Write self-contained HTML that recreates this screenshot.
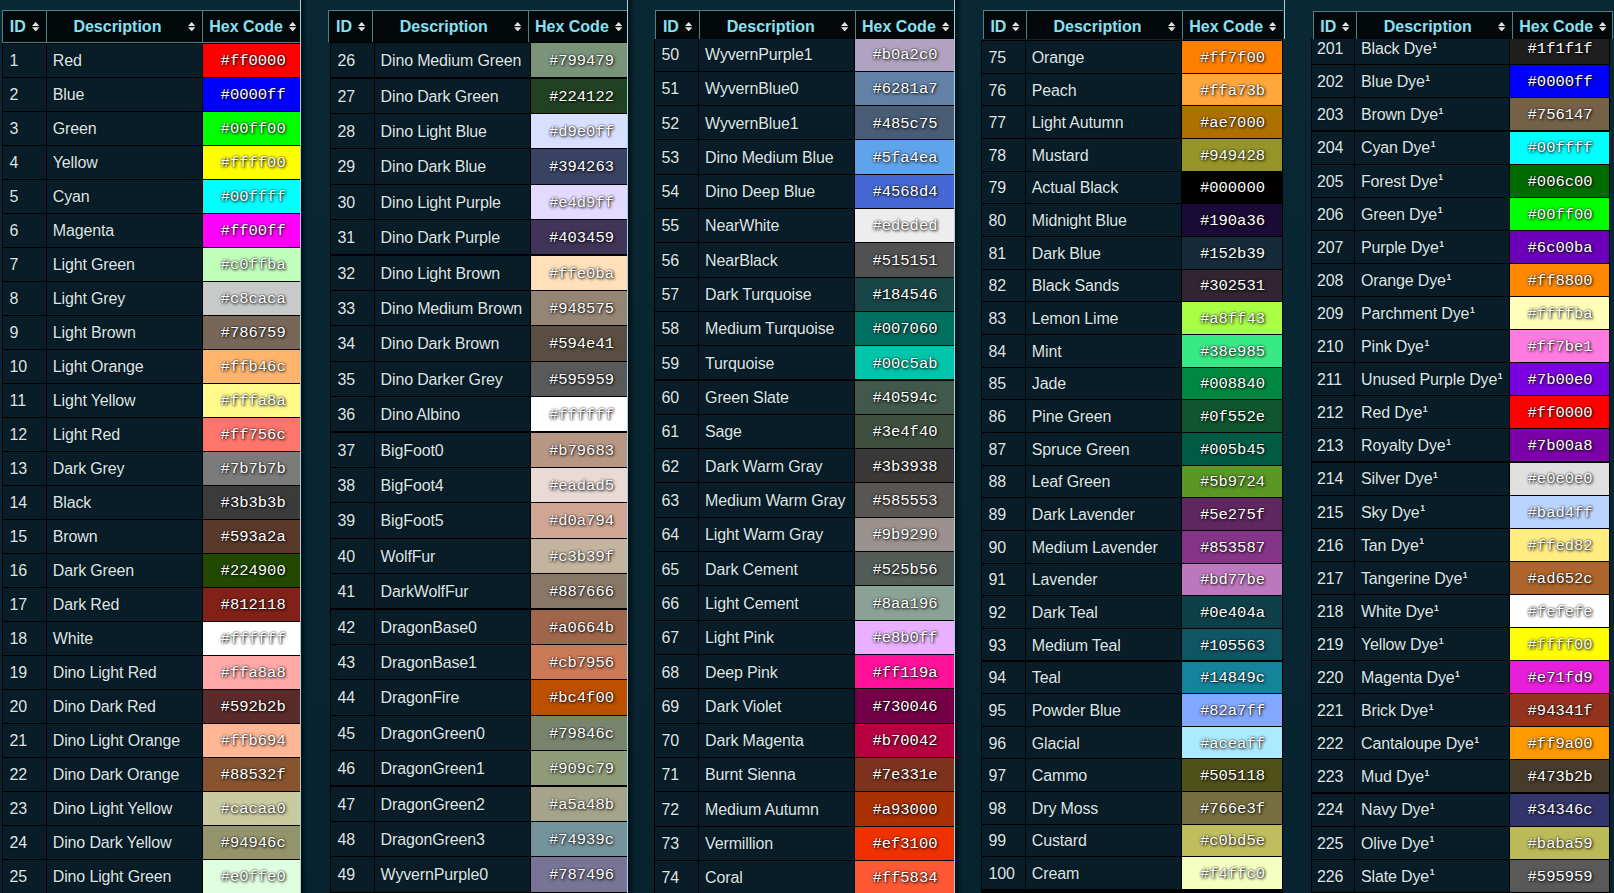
<!DOCTYPE html>
<html><head><meta charset="utf-8"><style>
html,body{margin:0;padding:0;}
body{width:1614px;height:893px;overflow:hidden;position:relative;background:#072531;font-family:"Liberation Sans",sans-serif;}
.bg{position:absolute;left:0;top:0;width:1614px;height:893px;background:linear-gradient(180deg,#0a2834 0%,#082632 50%,#07232f 100%);}
.k{position:absolute;background:#000;}
.c{position:absolute;background:#081d28;overflow:hidden;}
.t{position:absolute;color:#dde7ea;font-size:16px;letter-spacing:-0.15px;white-space:nowrap;line-height:16px;text-shadow:0 0 1.5px #000;}
.x{position:absolute;overflow:hidden;}
.xt{position:absolute;left:0;right:0;text-align:center;color:#fff;font-family:"Liberation Mono",monospace;font-size:15.5px;white-space:nowrap;line-height:16px;text-shadow:1px 1px 3px rgba(0,0,0,.9),0 0 2px rgba(0,0,0,.8);}
.h{position:absolute;background:#03090b;}
.hl{position:absolute;background:#4f8189;}
.ht{position:absolute;color:#88e0f2;font-weight:bold;font-size:16px;line-height:16px;white-space:nowrap;}
.ar{position:absolute;}
.s{font-size:8.5px;font-weight:bold;position:relative;top:-6.2px;margin-left:0.6px;letter-spacing:0;}
.bl{position:absolute;width:1.4px;background:#9cd4e6;top:0;}
.sh{position:absolute;top:0;height:893px;width:7px;background:linear-gradient(90deg,rgba(0,8,12,.75),rgba(0,8,12,0));}
</style></head><body><div class="bg"></div>

<div class="k" style="left:2px;top:43.4px;width:298px;height:849.6px"></div>
<div class="c" style="left:3px;top:43.5px;width:42.8px;height:33px"><span class="t" style="left:6.6px;top:9.4px">1</span></div>
<div class="c" style="left:46.8px;top:43.5px;width:155.2px;height:33px"><span class="t" style="left:6px;top:9.4px">Red</span></div>
<div class="x" style="left:203px;top:43.5px;width:97px;height:33px;background:#ff0000"><span class="xt" style="padding-left:3.3px;top:9.4px">#ff0000</span></div>
<div class="c" style="left:3px;top:77.5px;width:42.8px;height:33px"><span class="t" style="left:6.6px;top:9.4px">2</span></div>
<div class="c" style="left:46.8px;top:77.5px;width:155.2px;height:33px"><span class="t" style="left:6px;top:9.4px">Blue</span></div>
<div class="x" style="left:203px;top:77.5px;width:97px;height:33px;background:#0000ff"><span class="xt" style="padding-left:3.3px;top:9.4px">#0000ff</span></div>
<div class="c" style="left:3px;top:111.5px;width:42.8px;height:33px"><span class="t" style="left:6.6px;top:9.4px">3</span></div>
<div class="c" style="left:46.8px;top:111.5px;width:155.2px;height:33px"><span class="t" style="left:6px;top:9.4px">Green</span></div>
<div class="x" style="left:203px;top:111.5px;width:97px;height:33px;background:#00ff00"><span class="xt" style="padding-left:3.3px;top:9.4px">#00ff00</span></div>
<div class="c" style="left:3px;top:145.5px;width:42.8px;height:33px"><span class="t" style="left:6.6px;top:9.4px">4</span></div>
<div class="c" style="left:46.8px;top:145.5px;width:155.2px;height:33px"><span class="t" style="left:6px;top:9.4px">Yellow</span></div>
<div class="x" style="left:203px;top:145.5px;width:97px;height:33px;background:#ffff00"><span class="xt" style="padding-left:3.3px;top:9.4px">#ffff00</span></div>
<div class="c" style="left:3px;top:179.5px;width:42.8px;height:33px"><span class="t" style="left:6.6px;top:9.4px">5</span></div>
<div class="c" style="left:46.8px;top:179.5px;width:155.2px;height:33px"><span class="t" style="left:6px;top:9.4px">Cyan</span></div>
<div class="x" style="left:203px;top:179.5px;width:97px;height:33px;background:#00ffff"><span class="xt" style="padding-left:3.3px;top:9.4px">#00ffff</span></div>
<div class="c" style="left:3px;top:213.5px;width:42.8px;height:33px"><span class="t" style="left:6.6px;top:9.4px">6</span></div>
<div class="c" style="left:46.8px;top:213.5px;width:155.2px;height:33px"><span class="t" style="left:6px;top:9.4px">Magenta</span></div>
<div class="x" style="left:203px;top:213.5px;width:97px;height:33px;background:#ff00ff"><span class="xt" style="padding-left:3.3px;top:9.4px">#ff00ff</span></div>
<div class="c" style="left:3px;top:247.5px;width:42.8px;height:33px"><span class="t" style="left:6.6px;top:9.4px">7</span></div>
<div class="c" style="left:46.8px;top:247.5px;width:155.2px;height:33px"><span class="t" style="left:6px;top:9.4px">Light Green</span></div>
<div class="x" style="left:203px;top:247.5px;width:97px;height:33px;background:#c0ffba"><span class="xt" style="padding-left:3.3px;top:9.4px">#c0ffba</span></div>
<div class="c" style="left:3px;top:281.5px;width:42.8px;height:33px"><span class="t" style="left:6.6px;top:9.4px">8</span></div>
<div class="c" style="left:46.8px;top:281.5px;width:155.2px;height:33px"><span class="t" style="left:6px;top:9.4px">Light Grey</span></div>
<div class="x" style="left:203px;top:281.5px;width:97px;height:33px;background:#c8caca"><span class="xt" style="padding-left:3.3px;top:9.4px">#c8caca</span></div>
<div class="c" style="left:3px;top:315.5px;width:42.8px;height:33px"><span class="t" style="left:6.6px;top:9.4px">9</span></div>
<div class="c" style="left:46.8px;top:315.5px;width:155.2px;height:33px"><span class="t" style="left:6px;top:9.4px">Light Brown</span></div>
<div class="x" style="left:203px;top:315.5px;width:97px;height:33px;background:#786759"><span class="xt" style="padding-left:3.3px;top:9.4px">#786759</span></div>
<div class="c" style="left:3px;top:349.5px;width:42.8px;height:33px"><span class="t" style="left:6.6px;top:9.4px">10</span></div>
<div class="c" style="left:46.8px;top:349.5px;width:155.2px;height:33px"><span class="t" style="left:6px;top:9.4px">Light Orange</span></div>
<div class="x" style="left:203px;top:349.5px;width:97px;height:33px;background:#ffb46c"><span class="xt" style="padding-left:3.3px;top:9.4px">#ffb46c</span></div>
<div class="c" style="left:3px;top:383.5px;width:42.8px;height:33px"><span class="t" style="left:6.6px;top:9.4px">11</span></div>
<div class="c" style="left:46.8px;top:383.5px;width:155.2px;height:33px"><span class="t" style="left:6px;top:9.4px">Light Yellow</span></div>
<div class="x" style="left:203px;top:383.5px;width:97px;height:33px;background:#fffa8a"><span class="xt" style="padding-left:3.3px;top:9.4px">#fffa8a</span></div>
<div class="c" style="left:3px;top:417.5px;width:42.8px;height:33px"><span class="t" style="left:6.6px;top:9.4px">12</span></div>
<div class="c" style="left:46.8px;top:417.5px;width:155.2px;height:33px"><span class="t" style="left:6px;top:9.4px">Light Red</span></div>
<div class="x" style="left:203px;top:417.5px;width:97px;height:33px;background:#ff756c"><span class="xt" style="padding-left:3.3px;top:9.4px">#ff756c</span></div>
<div class="c" style="left:3px;top:451.5px;width:42.8px;height:33px"><span class="t" style="left:6.6px;top:9.4px">13</span></div>
<div class="c" style="left:46.8px;top:451.5px;width:155.2px;height:33px"><span class="t" style="left:6px;top:9.4px">Dark Grey</span></div>
<div class="x" style="left:203px;top:451.5px;width:97px;height:33px;background:#7b7b7b"><span class="xt" style="padding-left:3.3px;top:9.4px">#7b7b7b</span></div>
<div class="c" style="left:3px;top:485.5px;width:42.8px;height:33px"><span class="t" style="left:6.6px;top:9.4px">14</span></div>
<div class="c" style="left:46.8px;top:485.5px;width:155.2px;height:33px"><span class="t" style="left:6px;top:9.4px">Black</span></div>
<div class="x" style="left:203px;top:485.5px;width:97px;height:33px;background:#3b3b3b"><span class="xt" style="padding-left:3.3px;top:9.4px">#3b3b3b</span></div>
<div class="c" style="left:3px;top:519.5px;width:42.8px;height:33px"><span class="t" style="left:6.6px;top:9.4px">15</span></div>
<div class="c" style="left:46.8px;top:519.5px;width:155.2px;height:33px"><span class="t" style="left:6px;top:9.4px">Brown</span></div>
<div class="x" style="left:203px;top:519.5px;width:97px;height:33px;background:#593a2a"><span class="xt" style="padding-left:3.3px;top:9.4px">#593a2a</span></div>
<div class="c" style="left:3px;top:553.5px;width:42.8px;height:33px"><span class="t" style="left:6.6px;top:9.4px">16</span></div>
<div class="c" style="left:46.8px;top:553.5px;width:155.2px;height:33px"><span class="t" style="left:6px;top:9.4px">Dark Green</span></div>
<div class="x" style="left:203px;top:553.5px;width:97px;height:33px;background:#224900"><span class="xt" style="padding-left:3.3px;top:9.4px">#224900</span></div>
<div class="c" style="left:3px;top:587.5px;width:42.8px;height:33px"><span class="t" style="left:6.6px;top:9.4px">17</span></div>
<div class="c" style="left:46.8px;top:587.5px;width:155.2px;height:33px"><span class="t" style="left:6px;top:9.4px">Dark Red</span></div>
<div class="x" style="left:203px;top:587.5px;width:97px;height:33px;background:#812118"><span class="xt" style="padding-left:3.3px;top:9.4px">#812118</span></div>
<div class="c" style="left:3px;top:621.5px;width:42.8px;height:33px"><span class="t" style="left:6.6px;top:9.4px">18</span></div>
<div class="c" style="left:46.8px;top:621.5px;width:155.2px;height:33px"><span class="t" style="left:6px;top:9.4px">White</span></div>
<div class="x" style="left:203px;top:621.5px;width:97px;height:33px;background:#ffffff"><span class="xt" style="padding-left:3.3px;top:9.4px">#ffffff</span></div>
<div class="c" style="left:3px;top:655.5px;width:42.8px;height:33px"><span class="t" style="left:6.6px;top:9.4px">19</span></div>
<div class="c" style="left:46.8px;top:655.5px;width:155.2px;height:33px"><span class="t" style="left:6px;top:9.4px">Dino Light Red</span></div>
<div class="x" style="left:203px;top:655.5px;width:97px;height:33px;background:#ffa8a8"><span class="xt" style="padding-left:3.3px;top:9.4px">#ffa8a8</span></div>
<div class="c" style="left:3px;top:689.5px;width:42.8px;height:33px"><span class="t" style="left:6.6px;top:9.4px">20</span></div>
<div class="c" style="left:46.8px;top:689.5px;width:155.2px;height:33px"><span class="t" style="left:6px;top:9.4px">Dino Dark Red</span></div>
<div class="x" style="left:203px;top:689.5px;width:97px;height:33px;background:#592b2b"><span class="xt" style="padding-left:3.3px;top:9.4px">#592b2b</span></div>
<div class="c" style="left:3px;top:723.5px;width:42.8px;height:33px"><span class="t" style="left:6.6px;top:9.4px">21</span></div>
<div class="c" style="left:46.8px;top:723.5px;width:155.2px;height:33px"><span class="t" style="left:6px;top:9.4px">Dino Light Orange</span></div>
<div class="x" style="left:203px;top:723.5px;width:97px;height:33px;background:#ffb694"><span class="xt" style="padding-left:3.3px;top:9.4px">#ffb694</span></div>
<div class="c" style="left:3px;top:757.5px;width:42.8px;height:33px"><span class="t" style="left:6.6px;top:9.4px">22</span></div>
<div class="c" style="left:46.8px;top:757.5px;width:155.2px;height:33px"><span class="t" style="left:6px;top:9.4px">Dino Dark Orange</span></div>
<div class="x" style="left:203px;top:757.5px;width:97px;height:33px;background:#88532f"><span class="xt" style="padding-left:3.3px;top:9.4px">#88532f</span></div>
<div class="c" style="left:3px;top:791.5px;width:42.8px;height:33px"><span class="t" style="left:6.6px;top:9.4px">23</span></div>
<div class="c" style="left:46.8px;top:791.5px;width:155.2px;height:33px"><span class="t" style="left:6px;top:9.4px">Dino Light Yellow</span></div>
<div class="x" style="left:203px;top:791.5px;width:97px;height:33px;background:#cacaa0"><span class="xt" style="padding-left:3.3px;top:9.4px">#cacaa0</span></div>
<div class="c" style="left:3px;top:825.5px;width:42.8px;height:33px"><span class="t" style="left:6.6px;top:9.4px">24</span></div>
<div class="c" style="left:46.8px;top:825.5px;width:155.2px;height:33px"><span class="t" style="left:6px;top:9.4px">Dino Dark Yellow</span></div>
<div class="x" style="left:203px;top:825.5px;width:97px;height:33px;background:#94946c"><span class="xt" style="padding-left:3.3px;top:9.4px">#94946c</span></div>
<div class="c" style="left:3px;top:859.5px;width:42.8px;height:33px"><span class="t" style="left:6.6px;top:9.4px">25</span></div>
<div class="c" style="left:46.8px;top:859.5px;width:155.2px;height:33px"><span class="t" style="left:6px;top:9.4px">Dino Light Green</span></div>
<div class="x" style="left:203px;top:859.5px;width:97px;height:33px;background:#e0ffe0"><span class="xt" style="padding-left:3.3px;top:9.4px">#e0ffe0</span></div>
<div class="h" style="left:2px;top:10.4px;width:298.2px;height:33px">
<div class="hl" style="left:0;top:0;width:298.2px;height:1px"></div>
<div class="hl" style="left:0;top:0;width:1px;height:33px"></div>
<div class="hl" style="left:43.5px;top:0;width:1px;height:33px"></div>
<div class="hl" style="left:200.1px;top:0;width:1px;height:33px"></div>
<div class="hl" style="left:0;top:32px;width:298.2px;height:1px"></div>
<div class="ht" style="left:7.7px;top:8.6px">ID</div>
<div class="ht" style="left:71.4px;top:8.6px">Description</div>
<div class="ht" style="left:207.2px;top:8.6px">Hex Code</div>
<svg class="ar" style="left:29.6px;top:11.4px" width="7.4" height="9.4" viewBox="0 0 7.4 9.4"><path d="M3.7 0L7.4 4.1H0Z M0 5.2H7.4L3.7 9.4Z" fill="#e4e4e4"/></svg>
<svg class="ar" style="left:185.6px;top:11.4px" width="7.4" height="9.4" viewBox="0 0 7.4 9.4"><path d="M3.7 0L7.4 4.1H0Z M0 5.2H7.4L3.7 9.4Z" fill="#e4e4e4"/></svg>
<svg class="ar" style="left:286.8px;top:11.4px" width="7.4" height="9.4" viewBox="0 0 7.4 9.4"><path d="M3.7 0L7.4 4.1H0Z M0 5.2H7.4L3.7 9.4Z" fill="#e4e4e4"/></svg>
</div>
<div class="bl" style="left:300px;height:893px"></div>
<div class="sh" style="left:301.4px"></div>
<div class="k" style="left:329.8px;top:42.3px;width:296.8px;height:850.7px"></div>
<div class="c" style="left:330.8px;top:43.1px;width:42.8px;height:34.4px"><span class="t" style="left:6.6px;top:10.1px">26</span></div>
<div class="c" style="left:374.6px;top:43.1px;width:155.2px;height:34.4px"><span class="t" style="left:6px;top:10.1px">Dino Medium Green</span></div>
<div class="x" style="left:530.8px;top:43.1px;width:95.8px;height:34.4px;background:#799479"><span class="xt" style="padding-left:5.5px;top:10.1px">#799479</span></div>
<div class="c" style="left:330.8px;top:78.5px;width:42.8px;height:34.4px"><span class="t" style="left:6.6px;top:10.1px">27</span></div>
<div class="c" style="left:374.6px;top:78.5px;width:155.2px;height:34.4px"><span class="t" style="left:6px;top:10.1px">Dino Dark Green</span></div>
<div class="x" style="left:530.8px;top:78.5px;width:95.8px;height:34.4px;background:#224122"><span class="xt" style="padding-left:5.5px;top:10.1px">#224122</span></div>
<div class="c" style="left:330.8px;top:113.9px;width:42.8px;height:34.4px"><span class="t" style="left:6.6px;top:10.1px">28</span></div>
<div class="c" style="left:374.6px;top:113.9px;width:155.2px;height:34.4px"><span class="t" style="left:6px;top:10.1px">Dino Light Blue</span></div>
<div class="x" style="left:530.8px;top:113.9px;width:95.8px;height:34.4px;background:#d9e0ff"><span class="xt" style="padding-left:5.5px;top:10.1px">#d9e0ff</span></div>
<div class="c" style="left:330.8px;top:149.3px;width:42.8px;height:34.4px"><span class="t" style="left:6.6px;top:10.1px">29</span></div>
<div class="c" style="left:374.6px;top:149.3px;width:155.2px;height:34.4px"><span class="t" style="left:6px;top:10.1px">Dino Dark Blue</span></div>
<div class="x" style="left:530.8px;top:149.3px;width:95.8px;height:34.4px;background:#394263"><span class="xt" style="padding-left:5.5px;top:10.1px">#394263</span></div>
<div class="c" style="left:330.8px;top:184.7px;width:42.8px;height:34.4px"><span class="t" style="left:6.6px;top:10.1px">30</span></div>
<div class="c" style="left:374.6px;top:184.7px;width:155.2px;height:34.4px"><span class="t" style="left:6px;top:10.1px">Dino Light Purple</span></div>
<div class="x" style="left:530.8px;top:184.7px;width:95.8px;height:34.4px;background:#e4d9ff"><span class="xt" style="padding-left:5.5px;top:10.1px">#e4d9ff</span></div>
<div class="c" style="left:330.8px;top:220.1px;width:42.8px;height:34.4px"><span class="t" style="left:6.6px;top:10.1px">31</span></div>
<div class="c" style="left:374.6px;top:220.1px;width:155.2px;height:34.4px"><span class="t" style="left:6px;top:10.1px">Dino Dark Purple</span></div>
<div class="x" style="left:530.8px;top:220.1px;width:95.8px;height:34.4px;background:#403459"><span class="xt" style="padding-left:5.5px;top:10.1px">#403459</span></div>
<div class="c" style="left:330.8px;top:255.5px;width:42.8px;height:34.4px"><span class="t" style="left:6.6px;top:10.1px">32</span></div>
<div class="c" style="left:374.6px;top:255.5px;width:155.2px;height:34.4px"><span class="t" style="left:6px;top:10.1px">Dino Light Brown</span></div>
<div class="x" style="left:530.8px;top:255.5px;width:95.8px;height:34.4px;background:#ffe0ba"><span class="xt" style="padding-left:5.5px;top:10.1px">#ffe0ba</span></div>
<div class="c" style="left:330.8px;top:290.9px;width:42.8px;height:34.4px"><span class="t" style="left:6.6px;top:10.1px">33</span></div>
<div class="c" style="left:374.6px;top:290.9px;width:155.2px;height:34.4px"><span class="t" style="left:6px;top:10.1px">Dino Medium Brown</span></div>
<div class="x" style="left:530.8px;top:290.9px;width:95.8px;height:34.4px;background:#948575"><span class="xt" style="padding-left:5.5px;top:10.1px">#948575</span></div>
<div class="c" style="left:330.8px;top:326.3px;width:42.8px;height:34.4px"><span class="t" style="left:6.6px;top:10.1px">34</span></div>
<div class="c" style="left:374.6px;top:326.3px;width:155.2px;height:34.4px"><span class="t" style="left:6px;top:10.1px">Dino Dark Brown</span></div>
<div class="x" style="left:530.8px;top:326.3px;width:95.8px;height:34.4px;background:#594e41"><span class="xt" style="padding-left:5.5px;top:10.1px">#594e41</span></div>
<div class="c" style="left:330.8px;top:361.7px;width:42.8px;height:34.4px"><span class="t" style="left:6.6px;top:10.1px">35</span></div>
<div class="c" style="left:374.6px;top:361.7px;width:155.2px;height:34.4px"><span class="t" style="left:6px;top:10.1px">Dino Darker Grey</span></div>
<div class="x" style="left:530.8px;top:361.7px;width:95.8px;height:34.4px;background:#595959"><span class="xt" style="padding-left:5.5px;top:10.1px">#595959</span></div>
<div class="c" style="left:330.8px;top:397.1px;width:42.8px;height:34.4px"><span class="t" style="left:6.6px;top:10.1px">36</span></div>
<div class="c" style="left:374.6px;top:397.1px;width:155.2px;height:34.4px"><span class="t" style="left:6px;top:10.1px">Dino Albino</span></div>
<div class="x" style="left:530.8px;top:397.1px;width:95.8px;height:34.4px;background:#ffffff"><span class="xt" style="padding-left:5.5px;top:10.1px">#ffffff</span></div>
<div class="c" style="left:330.8px;top:432.5px;width:42.8px;height:34.4px"><span class="t" style="left:6.6px;top:10.1px">37</span></div>
<div class="c" style="left:374.6px;top:432.5px;width:155.2px;height:34.4px"><span class="t" style="left:6px;top:10.1px">BigFoot0</span></div>
<div class="x" style="left:530.8px;top:432.5px;width:95.8px;height:34.4px;background:#b79683"><span class="xt" style="padding-left:5.5px;top:10.1px">#b79683</span></div>
<div class="c" style="left:330.8px;top:467.9px;width:42.8px;height:34.4px"><span class="t" style="left:6.6px;top:10.1px">38</span></div>
<div class="c" style="left:374.6px;top:467.9px;width:155.2px;height:34.4px"><span class="t" style="left:6px;top:10.1px">BigFoot4</span></div>
<div class="x" style="left:530.8px;top:467.9px;width:95.8px;height:34.4px;background:#eadad5"><span class="xt" style="padding-left:5.5px;top:10.1px">#eadad5</span></div>
<div class="c" style="left:330.8px;top:503.3px;width:42.8px;height:34.4px"><span class="t" style="left:6.6px;top:10.1px">39</span></div>
<div class="c" style="left:374.6px;top:503.3px;width:155.2px;height:34.4px"><span class="t" style="left:6px;top:10.1px">BigFoot5</span></div>
<div class="x" style="left:530.8px;top:503.3px;width:95.8px;height:34.4px;background:#d0a794"><span class="xt" style="padding-left:5.5px;top:10.1px">#d0a794</span></div>
<div class="c" style="left:330.8px;top:538.7px;width:42.8px;height:34.4px"><span class="t" style="left:6.6px;top:10.1px">40</span></div>
<div class="c" style="left:374.6px;top:538.7px;width:155.2px;height:34.4px"><span class="t" style="left:6px;top:10.1px">WolfFur</span></div>
<div class="x" style="left:530.8px;top:538.7px;width:95.8px;height:34.4px;background:#c3b39f"><span class="xt" style="padding-left:5.5px;top:10.1px">#c3b39f</span></div>
<div class="c" style="left:330.8px;top:574.1px;width:42.8px;height:34.4px"><span class="t" style="left:6.6px;top:10.1px">41</span></div>
<div class="c" style="left:374.6px;top:574.1px;width:155.2px;height:34.4px"><span class="t" style="left:6px;top:10.1px">DarkWolfFur</span></div>
<div class="x" style="left:530.8px;top:574.1px;width:95.8px;height:34.4px;background:#887666"><span class="xt" style="padding-left:5.5px;top:10.1px">#887666</span></div>
<div class="c" style="left:330.8px;top:609.5px;width:42.8px;height:34.4px"><span class="t" style="left:6.6px;top:10.1px">42</span></div>
<div class="c" style="left:374.6px;top:609.5px;width:155.2px;height:34.4px"><span class="t" style="left:6px;top:10.1px">DragonBase0</span></div>
<div class="x" style="left:530.8px;top:609.5px;width:95.8px;height:34.4px;background:#a0664b"><span class="xt" style="padding-left:5.5px;top:10.1px">#a0664b</span></div>
<div class="c" style="left:330.8px;top:644.9px;width:42.8px;height:34.4px"><span class="t" style="left:6.6px;top:10.1px">43</span></div>
<div class="c" style="left:374.6px;top:644.9px;width:155.2px;height:34.4px"><span class="t" style="left:6px;top:10.1px">DragonBase1</span></div>
<div class="x" style="left:530.8px;top:644.9px;width:95.8px;height:34.4px;background:#cb7956"><span class="xt" style="padding-left:5.5px;top:10.1px">#cb7956</span></div>
<div class="c" style="left:330.8px;top:680.3px;width:42.8px;height:34.4px"><span class="t" style="left:6.6px;top:10.1px">44</span></div>
<div class="c" style="left:374.6px;top:680.3px;width:155.2px;height:34.4px"><span class="t" style="left:6px;top:10.1px">DragonFire</span></div>
<div class="x" style="left:530.8px;top:680.3px;width:95.8px;height:34.4px;background:#bc4f00"><span class="xt" style="padding-left:5.5px;top:10.1px">#bc4f00</span></div>
<div class="c" style="left:330.8px;top:715.7px;width:42.8px;height:34.4px"><span class="t" style="left:6.6px;top:10.1px">45</span></div>
<div class="c" style="left:374.6px;top:715.7px;width:155.2px;height:34.4px"><span class="t" style="left:6px;top:10.1px">DragonGreen0</span></div>
<div class="x" style="left:530.8px;top:715.7px;width:95.8px;height:34.4px;background:#79846c"><span class="xt" style="padding-left:5.5px;top:10.1px">#79846c</span></div>
<div class="c" style="left:330.8px;top:751.1px;width:42.8px;height:34.4px"><span class="t" style="left:6.6px;top:10.1px">46</span></div>
<div class="c" style="left:374.6px;top:751.1px;width:155.2px;height:34.4px"><span class="t" style="left:6px;top:10.1px">DragonGreen1</span></div>
<div class="x" style="left:530.8px;top:751.1px;width:95.8px;height:34.4px;background:#909c79"><span class="xt" style="padding-left:5.5px;top:10.1px">#909c79</span></div>
<div class="c" style="left:330.8px;top:786.5px;width:42.8px;height:34.4px"><span class="t" style="left:6.6px;top:10.1px">47</span></div>
<div class="c" style="left:374.6px;top:786.5px;width:155.2px;height:34.4px"><span class="t" style="left:6px;top:10.1px">DragonGreen2</span></div>
<div class="x" style="left:530.8px;top:786.5px;width:95.8px;height:34.4px;background:#a5a48b"><span class="xt" style="padding-left:5.5px;top:10.1px">#a5a48b</span></div>
<div class="c" style="left:330.8px;top:821.9px;width:42.8px;height:34.4px"><span class="t" style="left:6.6px;top:10.1px">48</span></div>
<div class="c" style="left:374.6px;top:821.9px;width:155.2px;height:34.4px"><span class="t" style="left:6px;top:10.1px">DragonGreen3</span></div>
<div class="x" style="left:530.8px;top:821.9px;width:95.8px;height:34.4px;background:#74939c"><span class="xt" style="padding-left:5.5px;top:10.1px">#74939c</span></div>
<div class="c" style="left:330.8px;top:857.3px;width:42.8px;height:34.4px"><span class="t" style="left:6.6px;top:10.1px">49</span></div>
<div class="c" style="left:374.6px;top:857.3px;width:155.2px;height:34.4px"><span class="t" style="left:6px;top:10.1px">WyvernPurple0</span></div>
<div class="x" style="left:530.8px;top:857.3px;width:95.8px;height:34.4px;background:#787496"><span class="xt" style="padding-left:5.5px;top:10.1px">#787496</span></div>
<div class="h" style="left:328.4px;top:10.4px;width:298.6px;height:31.9px">
<div class="hl" style="left:0;top:0;width:298.6px;height:1px"></div>
<div class="hl" style="left:0;top:0;width:1px;height:31.9px"></div>
<div class="hl" style="left:43.5px;top:0;width:1px;height:31.9px"></div>
<div class="hl" style="left:199.5px;top:0;width:1px;height:31.9px"></div>
<div class="ht" style="left:7.7px;top:8.6px">ID</div>
<div class="ht" style="left:71.4px;top:8.6px">Description</div>
<div class="ht" style="left:206.6px;top:8.6px">Hex Code</div>
<svg class="ar" style="left:29.6px;top:11.4px" width="7.4" height="9.4" viewBox="0 0 7.4 9.4"><path d="M3.7 0L7.4 4.1H0Z M0 5.2H7.4L3.7 9.4Z" fill="#e4e4e4"/></svg>
<svg class="ar" style="left:185.6px;top:11.4px" width="7.4" height="9.4" viewBox="0 0 7.4 9.4"><path d="M3.7 0L7.4 4.1H0Z M0 5.2H7.4L3.7 9.4Z" fill="#e4e4e4"/></svg>
<svg class="ar" style="left:286.2px;top:11.4px" width="7.4" height="9.4" viewBox="0 0 7.4 9.4"><path d="M3.7 0L7.4 4.1H0Z M0 5.2H7.4L3.7 9.4Z" fill="#e4e4e4"/></svg>
</div>
<div class="bl" style="left:627px;height:893px"></div>
<div class="sh" style="left:628.4px"></div>
<div class="k" style="left:653.8px;top:38.9px;width:300.2px;height:854.1px"></div>
<div class="c" style="left:654.8px;top:37.4px;width:43.3px;height:33.31px"><span class="t" style="left:6.6px;top:9.56px">50</span></div>
<div class="c" style="left:699.1px;top:37.4px;width:155px;height:33.31px"><span class="t" style="left:6px;top:9.56px">WyvernPurple1</span></div>
<div class="x" style="left:855.1px;top:37.4px;width:98.9px;height:33.31px;background:#b0a2c0"><span class="xt" style="padding-left:0.8px;top:9.56px">#b0a2c0</span></div>
<div class="c" style="left:654.8px;top:71.71px;width:43.3px;height:33.31px"><span class="t" style="left:6.6px;top:9.56px">51</span></div>
<div class="c" style="left:699.1px;top:71.71px;width:155px;height:33.31px"><span class="t" style="left:6px;top:9.56px">WyvernBlue0</span></div>
<div class="x" style="left:855.1px;top:71.71px;width:98.9px;height:33.31px;background:#6281a7"><span class="xt" style="padding-left:0.8px;top:9.56px">#6281a7</span></div>
<div class="c" style="left:654.8px;top:106.02px;width:43.3px;height:33.31px"><span class="t" style="left:6.6px;top:9.56px">52</span></div>
<div class="c" style="left:699.1px;top:106.02px;width:155px;height:33.31px"><span class="t" style="left:6px;top:9.56px">WyvernBlue1</span></div>
<div class="x" style="left:855.1px;top:106.02px;width:98.9px;height:33.31px;background:#485c75"><span class="xt" style="padding-left:0.8px;top:9.56px">#485c75</span></div>
<div class="c" style="left:654.8px;top:140.33px;width:43.3px;height:33.31px"><span class="t" style="left:6.6px;top:9.56px">53</span></div>
<div class="c" style="left:699.1px;top:140.33px;width:155px;height:33.31px"><span class="t" style="left:6px;top:9.56px">Dino Medium Blue</span></div>
<div class="x" style="left:855.1px;top:140.33px;width:98.9px;height:33.31px;background:#5fa4ea"><span class="xt" style="padding-left:0.8px;top:9.56px">#5fa4ea</span></div>
<div class="c" style="left:654.8px;top:174.64px;width:43.3px;height:33.31px"><span class="t" style="left:6.6px;top:9.56px">54</span></div>
<div class="c" style="left:699.1px;top:174.64px;width:155px;height:33.31px"><span class="t" style="left:6px;top:9.56px">Dino Deep Blue</span></div>
<div class="x" style="left:855.1px;top:174.64px;width:98.9px;height:33.31px;background:#4568d4"><span class="xt" style="padding-left:0.8px;top:9.56px">#4568d4</span></div>
<div class="c" style="left:654.8px;top:208.95px;width:43.3px;height:33.31px"><span class="t" style="left:6.6px;top:9.56px">55</span></div>
<div class="c" style="left:699.1px;top:208.95px;width:155px;height:33.31px"><span class="t" style="left:6px;top:9.56px">NearWhite</span></div>
<div class="x" style="left:855.1px;top:208.95px;width:98.9px;height:33.31px;background:#ededed"><span class="xt" style="padding-left:0.8px;top:9.56px">#ededed</span></div>
<div class="c" style="left:654.8px;top:243.26px;width:43.3px;height:33.31px"><span class="t" style="left:6.6px;top:9.56px">56</span></div>
<div class="c" style="left:699.1px;top:243.26px;width:155px;height:33.31px"><span class="t" style="left:6px;top:9.56px">NearBlack</span></div>
<div class="x" style="left:855.1px;top:243.26px;width:98.9px;height:33.31px;background:#515151"><span class="xt" style="padding-left:0.8px;top:9.56px">#515151</span></div>
<div class="c" style="left:654.8px;top:277.57px;width:43.3px;height:33.31px"><span class="t" style="left:6.6px;top:9.56px">57</span></div>
<div class="c" style="left:699.1px;top:277.57px;width:155px;height:33.31px"><span class="t" style="left:6px;top:9.56px">Dark Turquoise</span></div>
<div class="x" style="left:855.1px;top:277.57px;width:98.9px;height:33.31px;background:#184546"><span class="xt" style="padding-left:0.8px;top:9.56px">#184546</span></div>
<div class="c" style="left:654.8px;top:311.88px;width:43.3px;height:33.31px"><span class="t" style="left:6.6px;top:9.56px">58</span></div>
<div class="c" style="left:699.1px;top:311.88px;width:155px;height:33.31px"><span class="t" style="left:6px;top:9.56px">Medium Turquoise</span></div>
<div class="x" style="left:855.1px;top:311.88px;width:98.9px;height:33.31px;background:#007060"><span class="xt" style="padding-left:0.8px;top:9.56px">#007060</span></div>
<div class="c" style="left:654.8px;top:346.19px;width:43.3px;height:33.31px"><span class="t" style="left:6.6px;top:9.56px">59</span></div>
<div class="c" style="left:699.1px;top:346.19px;width:155px;height:33.31px"><span class="t" style="left:6px;top:9.56px">Turquoise</span></div>
<div class="x" style="left:855.1px;top:346.19px;width:98.9px;height:33.31px;background:#00c5ab"><span class="xt" style="padding-left:0.8px;top:9.56px">#00c5ab</span></div>
<div class="c" style="left:654.8px;top:380.5px;width:43.3px;height:33.31px"><span class="t" style="left:6.6px;top:9.56px">60</span></div>
<div class="c" style="left:699.1px;top:380.5px;width:155px;height:33.31px"><span class="t" style="left:6px;top:9.56px">Green Slate</span></div>
<div class="x" style="left:855.1px;top:380.5px;width:98.9px;height:33.31px;background:#40594c"><span class="xt" style="padding-left:0.8px;top:9.56px">#40594c</span></div>
<div class="c" style="left:654.8px;top:414.81px;width:43.3px;height:33.31px"><span class="t" style="left:6.6px;top:9.56px">61</span></div>
<div class="c" style="left:699.1px;top:414.81px;width:155px;height:33.31px"><span class="t" style="left:6px;top:9.56px">Sage</span></div>
<div class="x" style="left:855.1px;top:414.81px;width:98.9px;height:33.31px;background:#3e4f40"><span class="xt" style="padding-left:0.8px;top:9.56px">#3e4f40</span></div>
<div class="c" style="left:654.8px;top:449.12px;width:43.3px;height:33.31px"><span class="t" style="left:6.6px;top:9.56px">62</span></div>
<div class="c" style="left:699.1px;top:449.12px;width:155px;height:33.31px"><span class="t" style="left:6px;top:9.56px">Dark Warm Gray</span></div>
<div class="x" style="left:855.1px;top:449.12px;width:98.9px;height:33.31px;background:#3b3938"><span class="xt" style="padding-left:0.8px;top:9.56px">#3b3938</span></div>
<div class="c" style="left:654.8px;top:483.43px;width:43.3px;height:33.31px"><span class="t" style="left:6.6px;top:9.56px">63</span></div>
<div class="c" style="left:699.1px;top:483.43px;width:155px;height:33.31px"><span class="t" style="left:6px;top:9.56px">Medium Warm Gray</span></div>
<div class="x" style="left:855.1px;top:483.43px;width:98.9px;height:33.31px;background:#585553"><span class="xt" style="padding-left:0.8px;top:9.56px">#585553</span></div>
<div class="c" style="left:654.8px;top:517.74px;width:43.3px;height:33.31px"><span class="t" style="left:6.6px;top:9.56px">64</span></div>
<div class="c" style="left:699.1px;top:517.74px;width:155px;height:33.31px"><span class="t" style="left:6px;top:9.56px">Light Warm Gray</span></div>
<div class="x" style="left:855.1px;top:517.74px;width:98.9px;height:33.31px;background:#9b9290"><span class="xt" style="padding-left:0.8px;top:9.56px">#9b9290</span></div>
<div class="c" style="left:654.8px;top:552.05px;width:43.3px;height:33.31px"><span class="t" style="left:6.6px;top:9.56px">65</span></div>
<div class="c" style="left:699.1px;top:552.05px;width:155px;height:33.31px"><span class="t" style="left:6px;top:9.56px">Dark Cement</span></div>
<div class="x" style="left:855.1px;top:552.05px;width:98.9px;height:33.31px;background:#525b56"><span class="xt" style="padding-left:0.8px;top:9.56px">#525b56</span></div>
<div class="c" style="left:654.8px;top:586.36px;width:43.3px;height:33.31px"><span class="t" style="left:6.6px;top:9.56px">66</span></div>
<div class="c" style="left:699.1px;top:586.36px;width:155px;height:33.31px"><span class="t" style="left:6px;top:9.56px">Light Cement</span></div>
<div class="x" style="left:855.1px;top:586.36px;width:98.9px;height:33.31px;background:#8aa196"><span class="xt" style="padding-left:0.8px;top:9.56px">#8aa196</span></div>
<div class="c" style="left:654.8px;top:620.67px;width:43.3px;height:33.31px"><span class="t" style="left:6.6px;top:9.56px">67</span></div>
<div class="c" style="left:699.1px;top:620.67px;width:155px;height:33.31px"><span class="t" style="left:6px;top:9.56px">Light Pink</span></div>
<div class="x" style="left:855.1px;top:620.67px;width:98.9px;height:33.31px;background:#e8b0ff"><span class="xt" style="padding-left:0.8px;top:9.56px">#e8b0ff</span></div>
<div class="c" style="left:654.8px;top:654.98px;width:43.3px;height:33.31px"><span class="t" style="left:6.6px;top:9.56px">68</span></div>
<div class="c" style="left:699.1px;top:654.98px;width:155px;height:33.31px"><span class="t" style="left:6px;top:9.56px">Deep Pink</span></div>
<div class="x" style="left:855.1px;top:654.98px;width:98.9px;height:33.31px;background:#ff119a"><span class="xt" style="padding-left:0.8px;top:9.56px">#ff119a</span></div>
<div class="c" style="left:654.8px;top:689.29px;width:43.3px;height:33.31px"><span class="t" style="left:6.6px;top:9.56px">69</span></div>
<div class="c" style="left:699.1px;top:689.29px;width:155px;height:33.31px"><span class="t" style="left:6px;top:9.56px">Dark Violet</span></div>
<div class="x" style="left:855.1px;top:689.29px;width:98.9px;height:33.31px;background:#730046"><span class="xt" style="padding-left:0.8px;top:9.56px">#730046</span></div>
<div class="c" style="left:654.8px;top:723.6px;width:43.3px;height:33.31px"><span class="t" style="left:6.6px;top:9.56px">70</span></div>
<div class="c" style="left:699.1px;top:723.6px;width:155px;height:33.31px"><span class="t" style="left:6px;top:9.56px">Dark Magenta</span></div>
<div class="x" style="left:855.1px;top:723.6px;width:98.9px;height:33.31px;background:#b70042"><span class="xt" style="padding-left:0.8px;top:9.56px">#b70042</span></div>
<div class="c" style="left:654.8px;top:757.91px;width:43.3px;height:33.31px"><span class="t" style="left:6.6px;top:9.56px">71</span></div>
<div class="c" style="left:699.1px;top:757.91px;width:155px;height:33.31px"><span class="t" style="left:6px;top:9.56px">Burnt Sienna</span></div>
<div class="x" style="left:855.1px;top:757.91px;width:98.9px;height:33.31px;background:#7e331e"><span class="xt" style="padding-left:0.8px;top:9.56px">#7e331e</span></div>
<div class="c" style="left:654.8px;top:792.22px;width:43.3px;height:33.31px"><span class="t" style="left:6.6px;top:9.56px">72</span></div>
<div class="c" style="left:699.1px;top:792.22px;width:155px;height:33.31px"><span class="t" style="left:6px;top:9.56px">Medium Autumn</span></div>
<div class="x" style="left:855.1px;top:792.22px;width:98.9px;height:33.31px;background:#a93000"><span class="xt" style="padding-left:0.8px;top:9.56px">#a93000</span></div>
<div class="c" style="left:654.8px;top:826.53px;width:43.3px;height:33.31px"><span class="t" style="left:6.6px;top:9.56px">73</span></div>
<div class="c" style="left:699.1px;top:826.53px;width:155px;height:33.31px"><span class="t" style="left:6px;top:9.56px">Vermillion</span></div>
<div class="x" style="left:855.1px;top:826.53px;width:98.9px;height:33.31px;background:#ef3100"><span class="xt" style="padding-left:0.8px;top:9.56px">#ef3100</span></div>
<div class="c" style="left:654.8px;top:860.84px;width:43.3px;height:33.31px"><span class="t" style="left:6.6px;top:9.56px">74</span></div>
<div class="c" style="left:699.1px;top:860.84px;width:155px;height:33.31px"><span class="t" style="left:6px;top:9.56px">Coral</span></div>
<div class="x" style="left:855.1px;top:860.84px;width:98.9px;height:33.31px;background:#ff5834"><span class="xt" style="padding-left:0.8px;top:9.56px">#ff5834</span></div>
<div class="h" style="left:655.2px;top:10.4px;width:298.8px;height:28.5px">
<div class="hl" style="left:0;top:0;width:298.8px;height:1px"></div>
<div class="hl" style="left:0;top:0;width:1px;height:28.5px"></div>
<div class="hl" style="left:43.7px;top:0;width:1px;height:28.5px"></div>
<div class="hl" style="left:199.7px;top:0;width:1px;height:28.5px"></div>
<div class="ht" style="left:7.7px;top:8.6px">ID</div>
<div class="ht" style="left:71.6px;top:8.6px">Description</div>
<div class="ht" style="left:206.8px;top:8.6px">Hex Code</div>
<svg class="ar" style="left:29.6px;top:11.4px" width="7.4" height="9.4" viewBox="0 0 7.4 9.4"><path d="M3.7 0L7.4 4.1H0Z M0 5.2H7.4L3.7 9.4Z" fill="#e4e4e4"/></svg>
<svg class="ar" style="left:185.8px;top:11.4px" width="7.4" height="9.4" viewBox="0 0 7.4 9.4"><path d="M3.7 0L7.4 4.1H0Z M0 5.2H7.4L3.7 9.4Z" fill="#e4e4e4"/></svg>
<svg class="ar" style="left:286.4px;top:11.4px" width="7.4" height="9.4" viewBox="0 0 7.4 9.4"><path d="M3.7 0L7.4 4.1H0Z M0 5.2H7.4L3.7 9.4Z" fill="#e4e4e4"/></svg>
</div>
<div class="bl" style="left:954px;height:893px"></div>
<div class="sh" style="left:955.4px"></div>
<div class="k" style="left:981px;top:40.15px;width:302.2px;height:852.85px"></div>
<div class="c" style="left:982px;top:41.15px;width:42.8px;height:31.65px"><span class="t" style="left:6.6px;top:8.72px">75</span></div>
<div class="c" style="left:1025.8px;top:41.15px;width:155.2px;height:31.65px"><span class="t" style="left:6px;top:8.72px">Orange</span></div>
<div class="x" style="left:1182px;top:41.15px;width:100.2px;height:31.65px;background:#ff7f00"><span class="xt" style="padding-left:0.7px;top:8.72px">#ff7f00</span></div>
<div class="c" style="left:982px;top:73.8px;width:42.8px;height:31.65px"><span class="t" style="left:6.6px;top:8.72px">76</span></div>
<div class="c" style="left:1025.8px;top:73.8px;width:155.2px;height:31.65px"><span class="t" style="left:6px;top:8.72px">Peach</span></div>
<div class="x" style="left:1182px;top:73.8px;width:100.2px;height:31.65px;background:#ffa73b"><span class="xt" style="padding-left:0.7px;top:8.72px">#ffa73b</span></div>
<div class="c" style="left:982px;top:106.45px;width:42.8px;height:31.65px"><span class="t" style="left:6.6px;top:8.72px">77</span></div>
<div class="c" style="left:1025.8px;top:106.45px;width:155.2px;height:31.65px"><span class="t" style="left:6px;top:8.72px">Light Autumn</span></div>
<div class="x" style="left:1182px;top:106.45px;width:100.2px;height:31.65px;background:#ae7000"><span class="xt" style="padding-left:0.7px;top:8.72px">#ae7000</span></div>
<div class="c" style="left:982px;top:139.1px;width:42.8px;height:31.65px"><span class="t" style="left:6.6px;top:8.72px">78</span></div>
<div class="c" style="left:1025.8px;top:139.1px;width:155.2px;height:31.65px"><span class="t" style="left:6px;top:8.72px">Mustard</span></div>
<div class="x" style="left:1182px;top:139.1px;width:100.2px;height:31.65px;background:#949428"><span class="xt" style="padding-left:0.7px;top:8.72px">#949428</span></div>
<div class="c" style="left:982px;top:171.75px;width:42.8px;height:31.65px"><span class="t" style="left:6.6px;top:8.72px">79</span></div>
<div class="c" style="left:1025.8px;top:171.75px;width:155.2px;height:31.65px"><span class="t" style="left:6px;top:8.72px">Actual Black</span></div>
<div class="x" style="left:1182px;top:171.75px;width:100.2px;height:31.65px;background:#000000"><span class="xt" style="padding-left:0.7px;top:8.72px">#000000</span></div>
<div class="c" style="left:982px;top:204.4px;width:42.8px;height:31.65px"><span class="t" style="left:6.6px;top:8.72px">80</span></div>
<div class="c" style="left:1025.8px;top:204.4px;width:155.2px;height:31.65px"><span class="t" style="left:6px;top:8.72px">Midnight Blue</span></div>
<div class="x" style="left:1182px;top:204.4px;width:100.2px;height:31.65px;background:#190a36"><span class="xt" style="padding-left:0.7px;top:8.72px">#190a36</span></div>
<div class="c" style="left:982px;top:237.05px;width:42.8px;height:31.65px"><span class="t" style="left:6.6px;top:8.72px">81</span></div>
<div class="c" style="left:1025.8px;top:237.05px;width:155.2px;height:31.65px"><span class="t" style="left:6px;top:8.72px">Dark Blue</span></div>
<div class="x" style="left:1182px;top:237.05px;width:100.2px;height:31.65px;background:#152b39"><span class="xt" style="padding-left:0.7px;top:8.72px">#152b39</span></div>
<div class="c" style="left:982px;top:269.7px;width:42.8px;height:31.65px"><span class="t" style="left:6.6px;top:8.72px">82</span></div>
<div class="c" style="left:1025.8px;top:269.7px;width:155.2px;height:31.65px"><span class="t" style="left:6px;top:8.72px">Black Sands</span></div>
<div class="x" style="left:1182px;top:269.7px;width:100.2px;height:31.65px;background:#302531"><span class="xt" style="padding-left:0.7px;top:8.72px">#302531</span></div>
<div class="c" style="left:982px;top:302.35px;width:42.8px;height:31.65px"><span class="t" style="left:6.6px;top:8.72px">83</span></div>
<div class="c" style="left:1025.8px;top:302.35px;width:155.2px;height:31.65px"><span class="t" style="left:6px;top:8.72px">Lemon Lime</span></div>
<div class="x" style="left:1182px;top:302.35px;width:100.2px;height:31.65px;background:#a8ff43"><span class="xt" style="padding-left:0.7px;top:8.72px">#a8ff43</span></div>
<div class="c" style="left:982px;top:335px;width:42.8px;height:31.65px"><span class="t" style="left:6.6px;top:8.72px">84</span></div>
<div class="c" style="left:1025.8px;top:335px;width:155.2px;height:31.65px"><span class="t" style="left:6px;top:8.72px">Mint</span></div>
<div class="x" style="left:1182px;top:335px;width:100.2px;height:31.65px;background:#38e985"><span class="xt" style="padding-left:0.7px;top:8.72px">#38e985</span></div>
<div class="c" style="left:982px;top:367.65px;width:42.8px;height:31.65px"><span class="t" style="left:6.6px;top:8.72px">85</span></div>
<div class="c" style="left:1025.8px;top:367.65px;width:155.2px;height:31.65px"><span class="t" style="left:6px;top:8.72px">Jade</span></div>
<div class="x" style="left:1182px;top:367.65px;width:100.2px;height:31.65px;background:#008840"><span class="xt" style="padding-left:0.7px;top:8.72px">#008840</span></div>
<div class="c" style="left:982px;top:400.3px;width:42.8px;height:31.65px"><span class="t" style="left:6.6px;top:8.72px">86</span></div>
<div class="c" style="left:1025.8px;top:400.3px;width:155.2px;height:31.65px"><span class="t" style="left:6px;top:8.72px">Pine Green</span></div>
<div class="x" style="left:1182px;top:400.3px;width:100.2px;height:31.65px;background:#0f552e"><span class="xt" style="padding-left:0.7px;top:8.72px">#0f552e</span></div>
<div class="c" style="left:982px;top:432.95px;width:42.8px;height:31.65px"><span class="t" style="left:6.6px;top:8.72px">87</span></div>
<div class="c" style="left:1025.8px;top:432.95px;width:155.2px;height:31.65px"><span class="t" style="left:6px;top:8.72px">Spruce Green</span></div>
<div class="x" style="left:1182px;top:432.95px;width:100.2px;height:31.65px;background:#005b45"><span class="xt" style="padding-left:0.7px;top:8.72px">#005b45</span></div>
<div class="c" style="left:982px;top:465.6px;width:42.8px;height:31.65px"><span class="t" style="left:6.6px;top:8.72px">88</span></div>
<div class="c" style="left:1025.8px;top:465.6px;width:155.2px;height:31.65px"><span class="t" style="left:6px;top:8.72px">Leaf Green</span></div>
<div class="x" style="left:1182px;top:465.6px;width:100.2px;height:31.65px;background:#5b9724"><span class="xt" style="padding-left:0.7px;top:8.72px">#5b9724</span></div>
<div class="c" style="left:982px;top:498.25px;width:42.8px;height:31.65px"><span class="t" style="left:6.6px;top:8.72px">89</span></div>
<div class="c" style="left:1025.8px;top:498.25px;width:155.2px;height:31.65px"><span class="t" style="left:6px;top:8.72px">Dark Lavender</span></div>
<div class="x" style="left:1182px;top:498.25px;width:100.2px;height:31.65px;background:#5e275f"><span class="xt" style="padding-left:0.7px;top:8.72px">#5e275f</span></div>
<div class="c" style="left:982px;top:530.9px;width:42.8px;height:31.65px"><span class="t" style="left:6.6px;top:8.72px">90</span></div>
<div class="c" style="left:1025.8px;top:530.9px;width:155.2px;height:31.65px"><span class="t" style="left:6px;top:8.72px">Medium Lavender</span></div>
<div class="x" style="left:1182px;top:530.9px;width:100.2px;height:31.65px;background:#853587"><span class="xt" style="padding-left:0.7px;top:8.72px">#853587</span></div>
<div class="c" style="left:982px;top:563.55px;width:42.8px;height:31.65px"><span class="t" style="left:6.6px;top:8.72px">91</span></div>
<div class="c" style="left:1025.8px;top:563.55px;width:155.2px;height:31.65px"><span class="t" style="left:6px;top:8.72px">Lavender</span></div>
<div class="x" style="left:1182px;top:563.55px;width:100.2px;height:31.65px;background:#bd77be"><span class="xt" style="padding-left:0.7px;top:8.72px">#bd77be</span></div>
<div class="c" style="left:982px;top:596.2px;width:42.8px;height:31.65px"><span class="t" style="left:6.6px;top:8.72px">92</span></div>
<div class="c" style="left:1025.8px;top:596.2px;width:155.2px;height:31.65px"><span class="t" style="left:6px;top:8.72px">Dark Teal</span></div>
<div class="x" style="left:1182px;top:596.2px;width:100.2px;height:31.65px;background:#0e404a"><span class="xt" style="padding-left:0.7px;top:8.72px">#0e404a</span></div>
<div class="c" style="left:982px;top:628.85px;width:42.8px;height:31.65px"><span class="t" style="left:6.6px;top:8.72px">93</span></div>
<div class="c" style="left:1025.8px;top:628.85px;width:155.2px;height:31.65px"><span class="t" style="left:6px;top:8.72px">Medium Teal</span></div>
<div class="x" style="left:1182px;top:628.85px;width:100.2px;height:31.65px;background:#105563"><span class="xt" style="padding-left:0.7px;top:8.72px">#105563</span></div>
<div class="c" style="left:982px;top:661.5px;width:42.8px;height:31.65px"><span class="t" style="left:6.6px;top:8.72px">94</span></div>
<div class="c" style="left:1025.8px;top:661.5px;width:155.2px;height:31.65px"><span class="t" style="left:6px;top:8.72px">Teal</span></div>
<div class="x" style="left:1182px;top:661.5px;width:100.2px;height:31.65px;background:#14849c"><span class="xt" style="padding-left:0.7px;top:8.72px">#14849c</span></div>
<div class="c" style="left:982px;top:694.15px;width:42.8px;height:31.65px"><span class="t" style="left:6.6px;top:8.72px">95</span></div>
<div class="c" style="left:1025.8px;top:694.15px;width:155.2px;height:31.65px"><span class="t" style="left:6px;top:8.72px">Powder Blue</span></div>
<div class="x" style="left:1182px;top:694.15px;width:100.2px;height:31.65px;background:#82a7ff"><span class="xt" style="padding-left:0.7px;top:8.72px">#82a7ff</span></div>
<div class="c" style="left:982px;top:726.8px;width:42.8px;height:31.65px"><span class="t" style="left:6.6px;top:8.72px">96</span></div>
<div class="c" style="left:1025.8px;top:726.8px;width:155.2px;height:31.65px"><span class="t" style="left:6px;top:8.72px">Glacial</span></div>
<div class="x" style="left:1182px;top:726.8px;width:100.2px;height:31.65px;background:#aceaff"><span class="xt" style="padding-left:0.7px;top:8.72px">#aceaff</span></div>
<div class="c" style="left:982px;top:759.45px;width:42.8px;height:31.65px"><span class="t" style="left:6.6px;top:8.72px">97</span></div>
<div class="c" style="left:1025.8px;top:759.45px;width:155.2px;height:31.65px"><span class="t" style="left:6px;top:8.72px">Cammo</span></div>
<div class="x" style="left:1182px;top:759.45px;width:100.2px;height:31.65px;background:#505118"><span class="xt" style="padding-left:0.7px;top:8.72px">#505118</span></div>
<div class="c" style="left:982px;top:792.1px;width:42.8px;height:31.65px"><span class="t" style="left:6.6px;top:8.72px">98</span></div>
<div class="c" style="left:1025.8px;top:792.1px;width:155.2px;height:31.65px"><span class="t" style="left:6px;top:8.72px">Dry Moss</span></div>
<div class="x" style="left:1182px;top:792.1px;width:100.2px;height:31.65px;background:#766e3f"><span class="xt" style="padding-left:0.7px;top:8.72px">#766e3f</span></div>
<div class="c" style="left:982px;top:824.75px;width:42.8px;height:31.65px"><span class="t" style="left:6.6px;top:8.72px">99</span></div>
<div class="c" style="left:1025.8px;top:824.75px;width:155.2px;height:31.65px"><span class="t" style="left:6px;top:8.72px">Custard</span></div>
<div class="x" style="left:1182px;top:824.75px;width:100.2px;height:31.65px;background:#c0bd5e"><span class="xt" style="padding-left:0.7px;top:8.72px">#c0bd5e</span></div>
<div class="c" style="left:982px;top:857.4px;width:42.8px;height:31.65px"><span class="t" style="left:6.6px;top:8.72px">100</span></div>
<div class="c" style="left:1025.8px;top:857.4px;width:155.2px;height:31.65px"><span class="t" style="left:6px;top:8.72px">Cream</span></div>
<div class="x" style="left:1182px;top:857.4px;width:100.2px;height:31.65px;background:#f4ffc0"><span class="xt" style="padding-left:0.7px;top:8.72px">#f4ffc0</span></div>
<div class="h" style="left:982.7px;top:10.4px;width:300.8px;height:28.4px">
<div class="hl" style="left:0;top:0;width:300.8px;height:1px"></div>
<div class="hl" style="left:0;top:0;width:1px;height:28.4px"></div>
<div class="hl" style="left:42.9px;top:0;width:1px;height:28.4px"></div>
<div class="hl" style="left:199.5px;top:0;width:1px;height:28.4px"></div>
<div class="ht" style="left:7.7px;top:8.6px">ID</div>
<div class="ht" style="left:70.8px;top:8.6px">Description</div>
<div class="ht" style="left:206.6px;top:8.6px">Hex Code</div>
<svg class="ar" style="left:29.6px;top:11.4px" width="7.4" height="9.4" viewBox="0 0 7.4 9.4"><path d="M3.7 0L7.4 4.1H0Z M0 5.2H7.4L3.7 9.4Z" fill="#e4e4e4"/></svg>
<svg class="ar" style="left:185px;top:11.4px" width="7.4" height="9.4" viewBox="0 0 7.4 9.4"><path d="M3.7 0L7.4 4.1H0Z M0 5.2H7.4L3.7 9.4Z" fill="#e4e4e4"/></svg>
<svg class="ar" style="left:286.2px;top:11.4px" width="7.4" height="9.4" viewBox="0 0 7.4 9.4"><path d="M3.7 0L7.4 4.1H0Z M0 5.2H7.4L3.7 9.4Z" fill="#e4e4e4"/></svg>
</div>
<div class="bl" style="left:1283.5px;height:38.6px"></div>
<div class="k" style="left:1311.4px;top:38.7px;width:298.9px;height:854.3px"></div>
<div class="c" style="left:1312.4px;top:32.2px;width:41.6px;height:32.1px"><span class="t" style="left:4.6px;top:8.95px">201</span></div>
<div class="c" style="left:1355px;top:32.2px;width:154.2px;height:32.1px"><span class="t" style="left:6px;top:8.95px">Black Dye<span class="s">1</span></span></div>
<div class="x" style="left:1510.2px;top:32.2px;width:99.1px;height:32.1px;background:#1f1f1f"><span class="xt" style="padding-left:0.8px;top:8.95px">#1f1f1f</span></div>
<div class="c" style="left:1312.4px;top:65.3px;width:41.6px;height:32.1px"><span class="t" style="left:4.6px;top:8.95px">202</span></div>
<div class="c" style="left:1355px;top:65.3px;width:154.2px;height:32.1px"><span class="t" style="left:6px;top:8.95px">Blue Dye<span class="s">1</span></span></div>
<div class="x" style="left:1510.2px;top:65.3px;width:99.1px;height:32.1px;background:#0000ff"><span class="xt" style="padding-left:0.8px;top:8.95px">#0000ff</span></div>
<div class="c" style="left:1312.4px;top:98.4px;width:41.6px;height:32.1px"><span class="t" style="left:4.6px;top:8.95px">203</span></div>
<div class="c" style="left:1355px;top:98.4px;width:154.2px;height:32.1px"><span class="t" style="left:6px;top:8.95px">Brown Dye<span class="s">1</span></span></div>
<div class="x" style="left:1510.2px;top:98.4px;width:99.1px;height:32.1px;background:#756147"><span class="xt" style="padding-left:0.8px;top:8.95px">#756147</span></div>
<div class="c" style="left:1312.4px;top:131.5px;width:41.6px;height:32.1px"><span class="t" style="left:4.6px;top:8.95px">204</span></div>
<div class="c" style="left:1355px;top:131.5px;width:154.2px;height:32.1px"><span class="t" style="left:6px;top:8.95px">Cyan Dye<span class="s">1</span></span></div>
<div class="x" style="left:1510.2px;top:131.5px;width:99.1px;height:32.1px;background:#00ffff"><span class="xt" style="padding-left:0.8px;top:8.95px">#00ffff</span></div>
<div class="c" style="left:1312.4px;top:164.6px;width:41.6px;height:32.1px"><span class="t" style="left:4.6px;top:8.95px">205</span></div>
<div class="c" style="left:1355px;top:164.6px;width:154.2px;height:32.1px"><span class="t" style="left:6px;top:8.95px">Forest Dye<span class="s">1</span></span></div>
<div class="x" style="left:1510.2px;top:164.6px;width:99.1px;height:32.1px;background:#006c00"><span class="xt" style="padding-left:0.8px;top:8.95px">#006c00</span></div>
<div class="c" style="left:1312.4px;top:197.7px;width:41.6px;height:32.1px"><span class="t" style="left:4.6px;top:8.95px">206</span></div>
<div class="c" style="left:1355px;top:197.7px;width:154.2px;height:32.1px"><span class="t" style="left:6px;top:8.95px">Green Dye<span class="s">1</span></span></div>
<div class="x" style="left:1510.2px;top:197.7px;width:99.1px;height:32.1px;background:#00ff00"><span class="xt" style="padding-left:0.8px;top:8.95px">#00ff00</span></div>
<div class="c" style="left:1312.4px;top:230.8px;width:41.6px;height:32.1px"><span class="t" style="left:4.6px;top:8.95px">207</span></div>
<div class="c" style="left:1355px;top:230.8px;width:154.2px;height:32.1px"><span class="t" style="left:6px;top:8.95px">Purple Dye<span class="s">1</span></span></div>
<div class="x" style="left:1510.2px;top:230.8px;width:99.1px;height:32.1px;background:#6c00ba"><span class="xt" style="padding-left:0.8px;top:8.95px">#6c00ba</span></div>
<div class="c" style="left:1312.4px;top:263.9px;width:41.6px;height:32.1px"><span class="t" style="left:4.6px;top:8.95px">208</span></div>
<div class="c" style="left:1355px;top:263.9px;width:154.2px;height:32.1px"><span class="t" style="left:6px;top:8.95px">Orange Dye<span class="s">1</span></span></div>
<div class="x" style="left:1510.2px;top:263.9px;width:99.1px;height:32.1px;background:#ff8800"><span class="xt" style="padding-left:0.8px;top:8.95px">#ff8800</span></div>
<div class="c" style="left:1312.4px;top:297px;width:41.6px;height:32.1px"><span class="t" style="left:4.6px;top:8.95px">209</span></div>
<div class="c" style="left:1355px;top:297px;width:154.2px;height:32.1px"><span class="t" style="left:6px;top:8.95px">Parchment Dye<span class="s">1</span></span></div>
<div class="x" style="left:1510.2px;top:297px;width:99.1px;height:32.1px;background:#ffffba"><span class="xt" style="padding-left:0.8px;top:8.95px">#ffffba</span></div>
<div class="c" style="left:1312.4px;top:330.1px;width:41.6px;height:32.1px"><span class="t" style="left:4.6px;top:8.95px">210</span></div>
<div class="c" style="left:1355px;top:330.1px;width:154.2px;height:32.1px"><span class="t" style="left:6px;top:8.95px">Pink Dye<span class="s">1</span></span></div>
<div class="x" style="left:1510.2px;top:330.1px;width:99.1px;height:32.1px;background:#ff7be1"><span class="xt" style="padding-left:0.8px;top:8.95px">#ff7be1</span></div>
<div class="c" style="left:1312.4px;top:363.2px;width:41.6px;height:32.1px"><span class="t" style="left:4.6px;top:8.95px">211</span></div>
<div class="c" style="left:1355px;top:363.2px;width:154.2px;height:32.1px"><span class="t" style="left:6px;top:8.95px">Unused Purple Dye<span class="s">1</span></span></div>
<div class="x" style="left:1510.2px;top:363.2px;width:99.1px;height:32.1px;background:#7b00e0"><span class="xt" style="padding-left:0.8px;top:8.95px">#7b00e0</span></div>
<div class="c" style="left:1312.4px;top:396.3px;width:41.6px;height:32.1px"><span class="t" style="left:4.6px;top:8.95px">212</span></div>
<div class="c" style="left:1355px;top:396.3px;width:154.2px;height:32.1px"><span class="t" style="left:6px;top:8.95px">Red Dye<span class="s">1</span></span></div>
<div class="x" style="left:1510.2px;top:396.3px;width:99.1px;height:32.1px;background:#ff0000"><span class="xt" style="padding-left:0.8px;top:8.95px">#ff0000</span></div>
<div class="c" style="left:1312.4px;top:429.4px;width:41.6px;height:32.1px"><span class="t" style="left:4.6px;top:8.95px">213</span></div>
<div class="c" style="left:1355px;top:429.4px;width:154.2px;height:32.1px"><span class="t" style="left:6px;top:8.95px">Royalty Dye<span class="s">1</span></span></div>
<div class="x" style="left:1510.2px;top:429.4px;width:99.1px;height:32.1px;background:#7b00a8"><span class="xt" style="padding-left:0.8px;top:8.95px">#7b00a8</span></div>
<div class="c" style="left:1312.4px;top:462.5px;width:41.6px;height:32.1px"><span class="t" style="left:4.6px;top:8.95px">214</span></div>
<div class="c" style="left:1355px;top:462.5px;width:154.2px;height:32.1px"><span class="t" style="left:6px;top:8.95px">Silver Dye<span class="s">1</span></span></div>
<div class="x" style="left:1510.2px;top:462.5px;width:99.1px;height:32.1px;background:#e0e0e0"><span class="xt" style="padding-left:0.8px;top:8.95px">#e0e0e0</span></div>
<div class="c" style="left:1312.4px;top:495.6px;width:41.6px;height:32.1px"><span class="t" style="left:4.6px;top:8.95px">215</span></div>
<div class="c" style="left:1355px;top:495.6px;width:154.2px;height:32.1px"><span class="t" style="left:6px;top:8.95px">Sky Dye<span class="s">1</span></span></div>
<div class="x" style="left:1510.2px;top:495.6px;width:99.1px;height:32.1px;background:#bad4ff"><span class="xt" style="padding-left:0.8px;top:8.95px">#bad4ff</span></div>
<div class="c" style="left:1312.4px;top:528.7px;width:41.6px;height:32.1px"><span class="t" style="left:4.6px;top:8.95px">216</span></div>
<div class="c" style="left:1355px;top:528.7px;width:154.2px;height:32.1px"><span class="t" style="left:6px;top:8.95px">Tan Dye<span class="s">1</span></span></div>
<div class="x" style="left:1510.2px;top:528.7px;width:99.1px;height:32.1px;background:#ffed82"><span class="xt" style="padding-left:0.8px;top:8.95px">#ffed82</span></div>
<div class="c" style="left:1312.4px;top:561.8px;width:41.6px;height:32.1px"><span class="t" style="left:4.6px;top:8.95px">217</span></div>
<div class="c" style="left:1355px;top:561.8px;width:154.2px;height:32.1px"><span class="t" style="left:6px;top:8.95px">Tangerine Dye<span class="s">1</span></span></div>
<div class="x" style="left:1510.2px;top:561.8px;width:99.1px;height:32.1px;background:#ad652c"><span class="xt" style="padding-left:0.8px;top:8.95px">#ad652c</span></div>
<div class="c" style="left:1312.4px;top:594.9px;width:41.6px;height:32.1px"><span class="t" style="left:4.6px;top:8.95px">218</span></div>
<div class="c" style="left:1355px;top:594.9px;width:154.2px;height:32.1px"><span class="t" style="left:6px;top:8.95px">White Dye<span class="s">1</span></span></div>
<div class="x" style="left:1510.2px;top:594.9px;width:99.1px;height:32.1px;background:#fefefe"><span class="xt" style="padding-left:0.8px;top:8.95px">#fefefe</span></div>
<div class="c" style="left:1312.4px;top:628px;width:41.6px;height:32.1px"><span class="t" style="left:4.6px;top:8.95px">219</span></div>
<div class="c" style="left:1355px;top:628px;width:154.2px;height:32.1px"><span class="t" style="left:6px;top:8.95px">Yellow Dye<span class="s">1</span></span></div>
<div class="x" style="left:1510.2px;top:628px;width:99.1px;height:32.1px;background:#ffff00"><span class="xt" style="padding-left:0.8px;top:8.95px">#ffff00</span></div>
<div class="c" style="left:1312.4px;top:661.1px;width:41.6px;height:32.1px"><span class="t" style="left:4.6px;top:8.95px">220</span></div>
<div class="c" style="left:1355px;top:661.1px;width:154.2px;height:32.1px"><span class="t" style="left:6px;top:8.95px">Magenta Dye<span class="s">1</span></span></div>
<div class="x" style="left:1510.2px;top:661.1px;width:99.1px;height:32.1px;background:#e71fd9"><span class="xt" style="padding-left:0.8px;top:8.95px">#e71fd9</span></div>
<div class="c" style="left:1312.4px;top:694.2px;width:41.6px;height:32.1px"><span class="t" style="left:4.6px;top:8.95px">221</span></div>
<div class="c" style="left:1355px;top:694.2px;width:154.2px;height:32.1px"><span class="t" style="left:6px;top:8.95px">Brick Dye<span class="s">1</span></span></div>
<div class="x" style="left:1510.2px;top:694.2px;width:99.1px;height:32.1px;background:#94341f"><span class="xt" style="padding-left:0.8px;top:8.95px">#94341f</span></div>
<div class="c" style="left:1312.4px;top:727.3px;width:41.6px;height:32.1px"><span class="t" style="left:4.6px;top:8.95px">222</span></div>
<div class="c" style="left:1355px;top:727.3px;width:154.2px;height:32.1px"><span class="t" style="left:6px;top:8.95px">Cantaloupe Dye<span class="s">1</span></span></div>
<div class="x" style="left:1510.2px;top:727.3px;width:99.1px;height:32.1px;background:#ff9a00"><span class="xt" style="padding-left:0.8px;top:8.95px">#ff9a00</span></div>
<div class="c" style="left:1312.4px;top:760.4px;width:41.6px;height:32.1px"><span class="t" style="left:4.6px;top:8.95px">223</span></div>
<div class="c" style="left:1355px;top:760.4px;width:154.2px;height:32.1px"><span class="t" style="left:6px;top:8.95px">Mud Dye<span class="s">1</span></span></div>
<div class="x" style="left:1510.2px;top:760.4px;width:99.1px;height:32.1px;background:#473b2b"><span class="xt" style="padding-left:0.8px;top:8.95px">#473b2b</span></div>
<div class="c" style="left:1312.4px;top:793.5px;width:41.6px;height:32.1px"><span class="t" style="left:4.6px;top:8.95px">224</span></div>
<div class="c" style="left:1355px;top:793.5px;width:154.2px;height:32.1px"><span class="t" style="left:6px;top:8.95px">Navy Dye<span class="s">1</span></span></div>
<div class="x" style="left:1510.2px;top:793.5px;width:99.1px;height:32.1px;background:#34346c"><span class="xt" style="padding-left:0.8px;top:8.95px">#34346c</span></div>
<div class="c" style="left:1312.4px;top:826.6px;width:41.6px;height:32.1px"><span class="t" style="left:4.6px;top:8.95px">225</span></div>
<div class="c" style="left:1355px;top:826.6px;width:154.2px;height:32.1px"><span class="t" style="left:6px;top:8.95px">Olive Dye<span class="s">1</span></span></div>
<div class="x" style="left:1510.2px;top:826.6px;width:99.1px;height:32.1px;background:#baba59"><span class="xt" style="padding-left:0.8px;top:8.95px">#baba59</span></div>
<div class="c" style="left:1312.4px;top:859.7px;width:41.6px;height:32.1px"><span class="t" style="left:4.6px;top:8.95px">226</span></div>
<div class="c" style="left:1355px;top:859.7px;width:154.2px;height:32.1px"><span class="t" style="left:6px;top:8.95px">Slate Dye<span class="s">1</span></span></div>
<div class="x" style="left:1510.2px;top:859.7px;width:99.1px;height:32.1px;background:#595959"><span class="xt" style="padding-left:0.8px;top:8.95px">#595959</span></div>
<div class="h" style="left:1312.5px;top:10.6px;width:300.8px;height:28.1px">
<div class="hl" style="left:0;top:0;width:300.8px;height:1px"></div>
<div class="hl" style="left:0;top:0;width:1px;height:28.1px"></div>
<div class="hl" style="left:299.8px;top:0;width:1px;height:28.1px"></div>
<div class="hl" style="left:43.3px;top:0;width:1px;height:28.1px"></div>
<div class="hl" style="left:199.7px;top:0;width:1px;height:28.1px"></div>
<div class="ht" style="left:7.7px;top:8.4px">ID</div>
<div class="ht" style="left:71.2px;top:8.4px">Description</div>
<div class="ht" style="left:206.8px;top:8.4px">Hex Code</div>
<svg class="ar" style="left:29.6px;top:11.2px" width="7.4" height="9.4" viewBox="0 0 7.4 9.4"><path d="M3.7 0L7.4 4.1H0Z M0 5.2H7.4L3.7 9.4Z" fill="#e4e4e4"/></svg>
<svg class="ar" style="left:185.4px;top:11.2px" width="7.4" height="9.4" viewBox="0 0 7.4 9.4"><path d="M3.7 0L7.4 4.1H0Z M0 5.2H7.4L3.7 9.4Z" fill="#e4e4e4"/></svg>
<svg class="ar" style="left:286.4px;top:11.2px" width="7.4" height="9.4" viewBox="0 0 7.4 9.4"><path d="M3.7 0L7.4 4.1H0Z M0 5.2H7.4L3.7 9.4Z" fill="#e4e4e4"/></svg>
</div>
</body></html>
